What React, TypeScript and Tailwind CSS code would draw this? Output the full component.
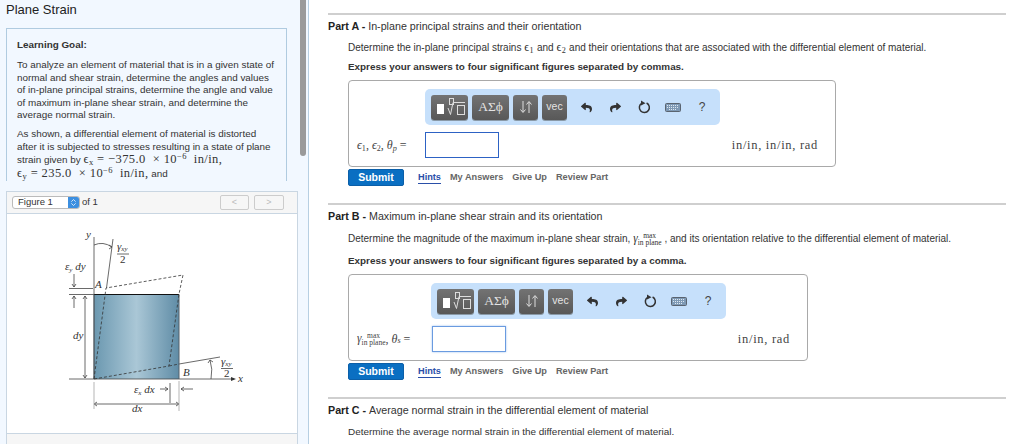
import type { ReactNode } from "react";
import { FaReply, FaShare } from "react-icons/fa";
import { ChevronsUpDown } from "lucide-react";

const serif = "font-['Liberation_Serif',serif]";

function Sub({ children }: { children: ReactNode }) {
  return <sub className="text-[0.68em]">{children}</sub>;
}

function Sup({ children }: { children: ReactNode }) {
  return <sup className="text-[0.68em]">{children}</sup>;
}

function MathText({ children, className = "" }: { children: ReactNode; className?: string }) {
  return <span className={`${serif} whitespace-pre ${className}`}>{children}</span>;
}

function GammaMax() {
  return (
    <span className="inline-flex items-center align-middle">
      <i className="text-[11.500px]">γ</i>
      <span className="flex flex-col text-center text-[7.500px] leading-[7px]">
        <span>max</span>
        <span>in plane</span>
      </span>
    </span>
  );
}

function Figure() {
  return (
    <svg viewBox="0 0 200 200" className="h-[200px] w-[200px]" fill="none">
      <defs>
        <linearGradient id="element" x1="0" x2="1" y1="0" y2="0">
          <stop offset="0" stopColor="#6b98b0" />
          <stop offset="0.5" stopColor="#aac7d6" />
          <stop offset="1" stopColor="#5f8ca6" />
        </linearGradient>
      </defs>
      <rect x="44" y="73.500" width="85" height="84.500" fill="url(#element)" />
      <g stroke="#444" strokeWidth="0.8">
        <path d="M44 158V16M19 67.500H43M19 73.500H44M19 158H184M35 75V157M44 183H129" />
        <path d="M24 53V66M24 75V87M110 168H118M143 168H131" />
        <path d="M56.500 67L63 18M129 143L170 136M120 162V182" />
        <path d="M44 24Q53 20 62 26M161 158Q163 148 160 139" />
        <path d="M67 33H79M171 147.500H183" />
        <path d="M22 63L24 66L26 63M22 78L24 75L26 78M33 78L35 75L37 78M33 154L35 157L37 154" />
        <path d="M47 181L44 183L47 185M126 181L129 183L126 185M115 166L118 168L115 170M134 166L131 168L134 170" />
        <path d="M59 24L62 26L59 28M158 142L160 139L163 141" />
      </g>
      <path d="M44 73.500H129" stroke="#111" strokeWidth="1" />
      <path d="M44 73.500V158M129 73.500V158" stroke="#55606a" strokeWidth="1" />
      <path d="M44 161V188M129 160V190" stroke="#b5b5b5" strokeWidth="1" />
      <path d="M44 158L56 67L133 54L129 73L119 145L44 158M119 145L129 143" stroke="#333" strokeWidth="0.8" strokeDasharray="3 2" />
      <path d="M181 156L186 158L181 160Z" fill="#333" />
      <g className="font-['Liberation_Serif',serif]" fontStyle="italic" fontSize="11" fill="#333">
        <text x="36" y="17">y</text>
        <text x="188" y="161">x</text>
        <text x="45" y="67">A</text>
        <text x="133" y="155">B</text>
        <text x="23" y="118">dy</text>
        <text x="82" y="191">dx</text>
        <text x="15" y="49">ε<tspan fontSize="7" dy="2">y</tspan><tspan dy="-2"> dy</tspan></text>
        <text x="84" y="172">ε<tspan fontSize="7" dy="2">x</tspan><tspan dy="-2"> dx</tspan></text>
        <text x="67" y="29">γ<tspan fontSize="7" dy="1">xy</tspan></text>
        <text x="171" y="144">γ<tspan fontSize="7" dy="1">xy</tspan></text>
        <text x="70" y="42" fontStyle="normal">2</text>
        <text x="174" y="156" fontStyle="normal">2</text>
      </g>
    </svg>
  );
}

function TemplateIcon() {
  return (
    <svg viewBox="0 0 36 25" className="h-[25px] w-[36px]" fill="none" stroke="#ddd" strokeWidth="1">
      <rect x="5" y="9" width="7" height="10" fill="#fff" stroke="none" />
      <rect x="17.500" y="3.500" width="4" height="6" />
      <path d="M16 13L18.500 19.500L21 7.500H33" />
      <rect x="25.500" y="10.500" width="7" height="9" />
    </svg>
  );
}

function SwapIcon() {
  return (
    <svg viewBox="0 0 14 14" className="h-[14px] w-[14px]" fill="none" stroke="#ddd" strokeWidth="1">
      <path d="M4 1V12M1.500 9.500L4 12.500L6.500 9.500M10 13V2M7.500 4.500L10 1.500L12.500 4.500" />
    </svg>
  );
}

function ResetIcon() {
  return (
    <svg viewBox="0 0 14 14" className="h-[14px] w-[14px]" fill="none">
      <path d="M4.600 3.300A5 5 0 1 0 9.600 3" stroke="#333" strokeWidth="1.500" />
      <path d="M4 0.500L8.500 3.200L4 5.500Z" fill="#333" />
    </svg>
  );
}

function KeyboardIcon() {
  return (
    <svg viewBox="0 0 16 9" className="h-[9px] w-[16px]">
      <rect x="0.500" y="0.500" width="15" height="8" rx="1" fill="#7f9ab5" stroke="#5a6470" />
      <path d="M2 2.500H14M2 4.500H14M4 6.500H12" stroke="#dfe8f1" strokeWidth="1" strokeDasharray="1 1" />
    </svg>
  );
}

function ToolButton({ children, className = "" }: { children: ReactNode; className?: string }) {
  return (
    <span
      className={`flex h-[25px] items-center justify-center rounded-[3px] bg-gradient-to-b from-[#737373] to-[#585858] text-[#e4e4e4] shadow-[0_1px_0_#8a9aa8] ${className}`}
    >
      {children}
    </span>
  );
}

function Toolbar() {
  return (
    <div className="flex h-[36px] w-[295px] items-center rounded-[5px] bg-[#c6e0fb] pl-[6px]">
      <ToolButton className="w-[37px]">
        <TemplateIcon />
      </ToolButton>
      <ToolButton className={`ml-1 w-[37px] text-[13.500px] ${serif}`}>ΑΣϕ</ToolButton>
      <ToolButton className="ml-1 w-[25px]">
        <SwapIcon />
      </ToolButton>
      <ToolButton className="ml-1 w-[25px] text-[10.500px]">vec</ToolButton>
      <span className="ml-[10px] flex w-[18px] justify-center text-[#333]">
        <FaReply className="h-[11px] w-[11px]" />
      </span>
      <span className="ml-[11px] flex w-[18px] justify-center text-[#333]">
        <FaShare className="h-[11px] w-[11px]" />
      </span>
      <span className="ml-[11px] flex w-[18px] justify-center">
        <ResetIcon />
      </span>
      <span className="ml-[11px] flex w-[18px] justify-center">
        <KeyboardIcon />
      </span>
      <span className="ml-[11px] flex w-[18px] justify-center text-[12px] text-[#444]">?</span>
    </div>
  );
}

function AnswerBox({
  width,
  toolbarOffset,
  labelWidth,
  label,
  unit,
  inputClass,
}: {
  width: string;
  toolbarOffset: string;
  labelWidth: string;
  label: ReactNode;
  unit: string;
  inputClass: string;
}) {
  return (
    <div className={`${width} h-[87px] rounded-[4px] border border-[#a9a9a9] bg-white pt-2`}>
      <div className={toolbarOffset}>
        <Toolbar />
      </div>
      <div className="mt-[7px] flex items-center">
        <div className={`${labelWidth} flex h-[26px] shrink-0 items-center pl-2 text-[12px] text-[#444] ${serif}`}>{label}</div>
        <div className={`${inputClass} h-[26px] w-[74px] shrink-0 bg-white`} />
        <MathText className="ml-auto pr-[17px] text-[12.500px] tracking-[0.7px] text-[#444]">{unit}</MathText>
      </div>
    </div>
  );
}

function Actions() {
  return (
    <div className="mt-[2px] flex h-[17px] items-center">
      <span className="flex h-[17px] w-[56px] items-center justify-center rounded-[2px] border border-[#0b5fa8] bg-[#0a6fc2] text-[10.500px] font-bold text-white">
        Submit
      </span>
      <span className="ml-[14px] border-b border-[#2a4fa8] text-[9.200px] leading-[11px] font-bold text-[#2a4fa8]">Hints</span>
      <span className="ml-[9px] text-[9.200px] font-bold text-[#666]">My Answers</span>
      <span className="ml-[9px] text-[9.200px] font-bold text-[#666]">Give Up</span>
      <span className="ml-[9px] text-[9.200px] font-bold text-[#666]">Review Part</span>
    </div>
  );
}

function PartHeading({ part, title }: { part: string; title: string }) {
  return (
    <h2 className="text-[10.700px] leading-[13px] text-[#333]">
      <b className="text-[#222]">Part {part} - </b>
      {title}
    </h2>
  );
}

export default function App() {
  return (
    <div className="flex h-[444px] w-[1024px] overflow-hidden bg-white font-['Liberation_Sans',Arial,sans-serif] text-[#333]">
      <aside className="flex h-full w-[309px] shrink-0 flex-col border-r border-[#b7cfe2] bg-[#f2f8ff]">
        <div className="flex h-[181px] shrink-0">
          <div className="w-[298px] shrink-0 overflow-hidden pl-[6px]">
            <h1 className="mt-[2px] text-[13px] leading-[15px] text-[#222]">Plane Strain</h1>
            <div className="mt-[11px] h-[200px] w-[281px] border border-[#b0cbe0] px-[10px] pt-[10px] text-[9.900px] leading-[12.400px]">
              <p className="font-bold">Learning Goal:</p>
              <p className="mt-2">
                To analyze an element of material that is in a given state of normal and shear strain, determine the angles and values of in-plane principal strains, determine the angle and value of maximum in-plane shear strain, and determine the average normal strain.
              </p>
              <p className="mt-[7px]">
                As shown, a differential element of material is distorted after it is subjected to stresses resulting in a state of plane strain given by <MathText className="text-[12.500px] leading-[13.500px] tracking-[0.4px]">ϵ<Sub>x</Sub> = −375.0  × 10<Sup>−6</Sup>  in/in,</MathText>
                <br />
                <MathText className="text-[12.500px] leading-[13.500px] tracking-[0.4px]">ϵ<Sub>y</Sub> = 235.0  × 10<Sup>−6</Sup>  in/in,</MathText> and
              </p>
            </div>
          </div>
          <div className="ml-[2px] h-[156px] w-[6px] rounded-b-full bg-[#9a9a9a]" />
        </div>
        <div className="mt-[10px] ml-[6px] flex h-[253px] w-[292px] flex-col border border-b-0 border-[#c9d6e2] bg-white">
          <div className="flex h-[22px] shrink-0 items-center border-b border-[#c9d6e2] bg-[#f6f6f6] pr-[13px] pl-[5px]">
            <span className="flex h-[13px] w-[68px] items-center justify-between overflow-hidden rounded-[3px] border border-[#bbb] bg-white pl-[5px] text-[9.500px]">
              Figure 1
              <span className="flex h-full w-[11px] items-center justify-center bg-[#3c8fe0] text-white">
                <ChevronsUpDown className="h-[9px] w-[9px]" />
              </span>
            </span>
            <span className="ml-[2px] text-[9.500px]">of 1</span>
            <span className="ml-auto flex h-[15px] w-[29px] items-center justify-center rounded-[2px] border border-[#ccc] text-[9px] text-[#bbb]">&lt;</span>
            <span className="ml-[5px] flex h-[15px] w-[30px] items-center justify-center rounded-[2px] border border-[#ccc] text-[9px] text-[#bbb]">&gt;</span>
          </div>
          <div className="h-[219px] shrink-0 pt-[7px] pl-[43px]">
            <Figure />
          </div>
          <div className="flex-1 border-t border-[#c9d6e2] bg-[#f6f6f6]" />
        </div>
      </aside>
      <main className="min-w-0 flex-1 pt-[13px] pr-[18px] pl-[19px]">
        <section className="h-[190px] border-t-2 border-[#cfcfcf] pt-[5px]">
          <PartHeading part="A" title="In-plane principal strains and their orientation" />
          <div className="pl-5">
            <p className="mt-[8px] h-[13px] text-[10px] leading-[13px]">
              Determine the in-plane principal strains <MathText className="text-[12px] tracking-[0.5px]">ϵ<Sub>1</Sub></MathText> and <MathText className="text-[12px] tracking-[0.5px]">ϵ<Sub>2</Sub></MathText> and their orientations that are associated with the differential element of material.
            </p>
            <p className="mt-[6px] text-[9.900px] leading-[13px] font-bold">Express your answers to four significant figures separated by commas.</p>
            <div className="mt-[7px]">
              <AnswerBox
                width="w-[488px]"
                toolbarOffset="pl-[76px]"
                labelWidth="w-[76px]"
                inputClass="border border-[#2d62c4]"
                unit="in/in, in/in, rad"
                label={
                  <span className="whitespace-pre">
                    <i>ϵ</i><Sub>1</Sub>, <i>ϵ</i><Sub>2</Sub>, <i>θ</i><Sub><i>p</i></Sub> =
                  </span>
                }
              />
            </div>
            <Actions />
          </div>
        </section>
        <section className="h-[194px] border-t-2 border-[#cfcfcf] pt-[5px]">
          <PartHeading part="B" title="Maximum in-plane shear strain and its orientation" />
          <div className="pl-5">
            <p className="mt-[9px] flex h-[13px] items-center text-[10px] leading-[13px] whitespace-pre">
              Determine the magnitude of the maximum in-plane shear strain, <span className={serif}><GammaMax /></span> , and its orientation relative to the differential element of material.
            </p>
            <p className="mt-[9px] text-[9.900px] leading-[13px] font-bold">Express your answers to four significant figures separated by a comma.</p>
            <div className="mt-[7px]">
              <AnswerBox
                width="w-[460px]"
                toolbarOffset="pl-[82px]"
                labelWidth="w-[83px]"
                inputClass="border border-[#6a9be0] shadow-[0_0_2px_#9fc0ee]"
                unit="in/in, rad"
                label={
                  <span className="flex items-center whitespace-pre">
                    <GammaMax />, <i>θ</i><Sub><i>s</i></Sub> =
                  </span>
                }
              />
            </div>
            <Actions />
          </div>
        </section>
        <section className="border-t-2 border-[#cfcfcf] pt-[5px]">
          <PartHeading part="C" title="Average normal strain in the differential element of material" />
          <div className="pl-5">
            <p className="mt-[8px] text-[9.930px] leading-[13px]">Determine the average normal strain in the differential element of material.</p>
          </div>
        </section>
      </main>
    </div>
  );
}
